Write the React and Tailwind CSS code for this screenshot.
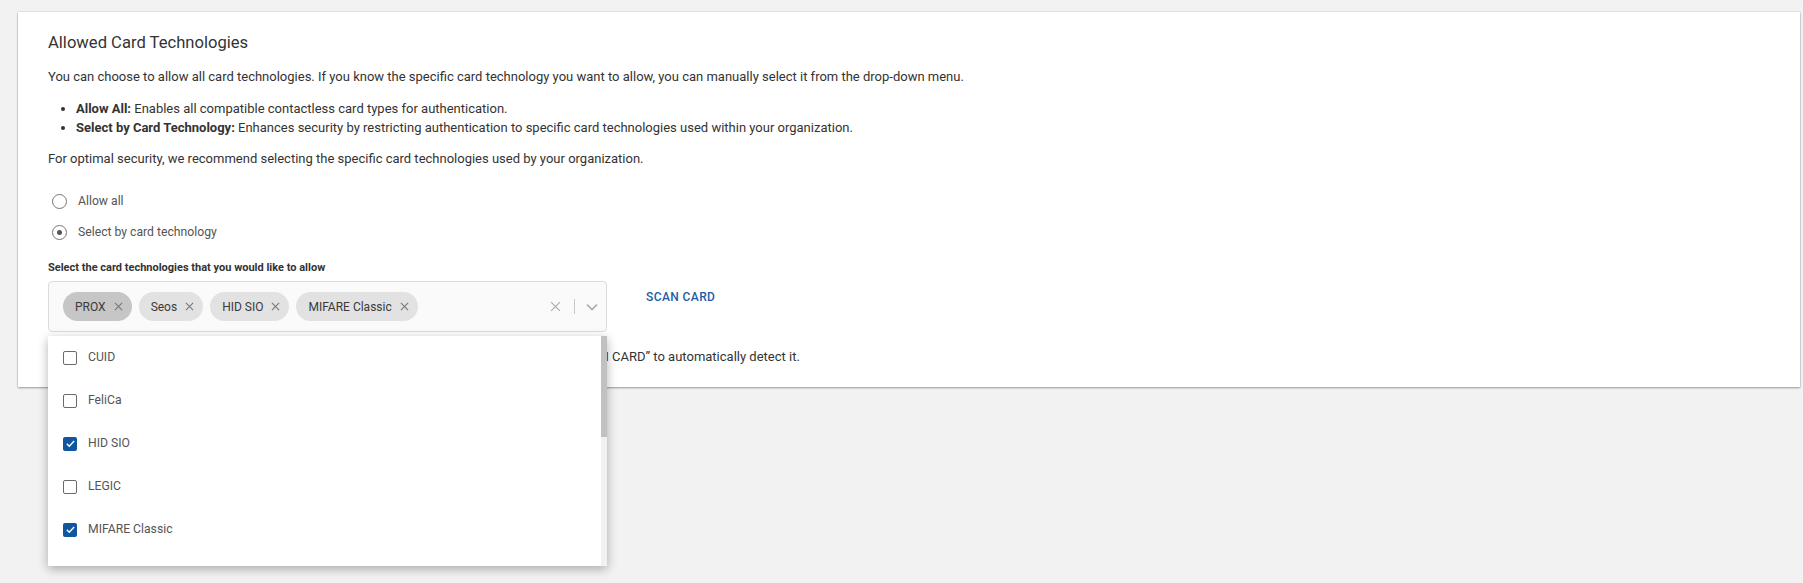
import { useState } from 'react'

const technologies = ['CUID', 'FeliCa', 'HID SIO', 'LEGIC', 'MIFARE Classic', 'MIFARE DESFire']

const XIcon = ({ className }) => (
	<svg className={className} viewBox="0 0 10 10" fill="none" stroke="currentColor" strokeWidth="1.2">
		<path d="M1 1l8 8M9 1L1 9" />
	</svg>
)

const Chip = ({ label, active }) => (
	<div className={`flex items-center h-[29px] pl-3 pr-[9px] gap-2 rounded-full ${active ? 'bg-[#c6c6c6]' : 'bg-[#e2e2e2]'}`}>
		<span className="text-[12px] text-[#3a3a3a] leading-none">{label}</span>
		<XIcon className="w-[9px] h-[9px] text-[#777]" />
	</div>
)

const Radio = ({ label, checked }) => (
	<label className="flex items-center h-[31px] pl-[4px]">
		<span className="w-[15px] h-[15px] rounded-full border border-[#767676] flex items-center justify-center bg-white">
			{checked && <span className="w-[5px] h-[5px] rounded-full bg-[#555]" />}
		</span>
		<span className="ml-[11px] text-[12.2px] text-[#555]">{label}</span>
	</label>
)

const Checkbox = ({ checked }) =>
	checked ? (
		<span className="w-[14px] h-[14px] rounded-[2px] bg-[#0f569f] flex items-center justify-center">
			<svg className="w-[11px] h-[11px]" viewBox="0 0 12 12" fill="none" stroke="white" strokeWidth="1.5">
				<path d="M2 6.3l2.6 2.6L10 3.2" />
			</svg>
		</span>
	) : (
		<span className="w-[14px] h-[14px] rounded-[2px] border-[1.5px] border-[#6b6b6b] bg-white" />
	)

export default function App() {
	const [selected] = useState(['PROX', 'Seos', 'HID SIO', 'MIFARE Classic'])

	return (
		<div className="min-h-screen bg-[#f2f2f2] pt-[12px] pl-[18px] pr-[3px] font-['Roboto',sans-serif]">
			<div className="bg-white shadow-[0_1px_2px_rgba(0,0,0,0.35),0_0_1px_rgba(0,0,0,0.25)] pt-[19px] pb-[20px] px-[30px]">
				<h2 className="text-[16.6px] leading-[24px] text-[#333]">Allowed Card Technologies</h2>
				<p className="mt-3 text-[13px] leading-[20px] text-[#333]">
					You can choose to allow all card technologies. If you know the specific card technology you want to allow, you can manually select it from the drop-down menu.
				</p>
				<ul className="mt-3 list-disc pl-[28px] text-[13px] leading-[19px] text-[#333]">
					<li><span className="font-bold">Allow All:</span> Enables all compatible contactless card types for authentication.</li>
					<li><span className="font-bold">Select by Card Technology:</span> Enhances security by restricting authentication to specific card technologies used within your organization.</li>
				</ul>
				<p className="mt-3 text-[13px] leading-[20px] text-[#333]">
					For optimal security, we recommend selecting the specific card technologies used by your organization.
				</p>

				<div className="mt-[17px] flex flex-col">
					<Radio label="Allow all" />
					<Radio label="Select by card technology" checked />
				</div>

				<div className="mt-[12px] text-[11px] leading-[16px] font-bold text-[#333]">
					Select the card technologies that you would like to allow
				</div>

				<div className="mt-[5px] flex items-start">
					<div className="relative w-[559px]">
						<div className="h-[51px] border border-[#dcdcdc] rounded-[4px] bg-[#fafafa] flex items-center pl-[14px] pr-[8px]">
							<div className="flex items-center gap-[7px] flex-1">
								{selected.map((t, i) => (
									<Chip key={t} label={t} active={i === 0} />
								))}
							</div>
							<XIcon className="w-[11px] h-[11px] text-[#b0b0b0]" />
							<span className="ml-[13px] w-px h-[15px] bg-[#c8c8c8]" />
							<svg className="ml-[11px] w-[12px] h-[8px] text-[#aaa]" viewBox="0 0 12 8" fill="none" stroke="currentColor" strokeWidth="1.6">
								<path d="M1 1.5l5 5 5-5" />
							</svg>
						</div>

						<div className="absolute left-0 top-[55px] w-full h-[230px] bg-white shadow-[0_3px_10px_rgba(0,0,0,0.3)] flex z-10">
							<div className="flex-1 overflow-hidden">
								{technologies.map((t) => (
									<div key={t} className="h-[43px] flex items-center pl-[15px]">
										<Checkbox checked={selected.includes(t)} />
										<span className="ml-[11px] text-[12.2px] text-[#555]">{t}</span>
									</div>
								))}
							</div>
							<div className="w-[6px] bg-[#f1f1f1]">
								<div className="h-[101px] bg-[#c1c1c1]" />
							</div>
						</div>
					</div>
					<button className="ml-[39px] h-[32px] text-[12px] font-medium text-[#1d5ea6] tracking-[0.4px]">SCAN CARD</button>
				</div>

				<p className="mt-[15px] text-[13px] leading-[20px] text-[#333]">
					If you are not sure which card technology you have, place your card on the reader and click “SCAN CARD” to automatically detect it.
				</p>
			</div>
		</div>
	)
}
